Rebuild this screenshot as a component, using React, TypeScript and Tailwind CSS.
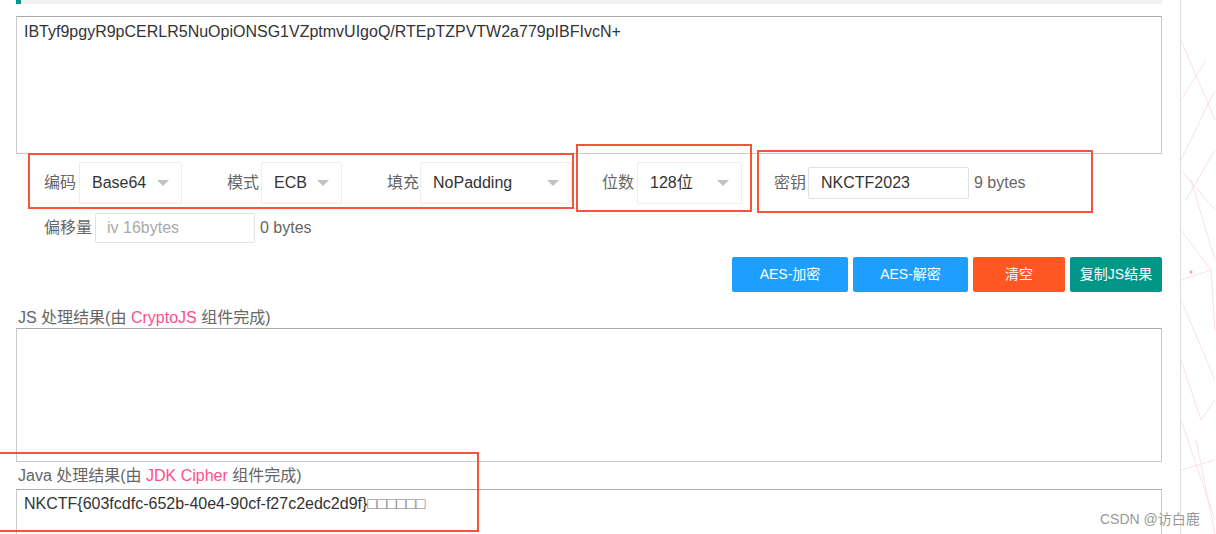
import React from "react";

const font = { fontFamily: '"Liberation Sans", Arial, "Noto Sans CJK SC", sans-serif' };

function Select({ value, width }: { value: string; width: string }) {
  return (
    <div
      className={`${width} flex h-[42px] items-center justify-between rounded-[2px] border border-[#eeeeee] bg-white pl-[12px] pr-[12px] text-[16px] text-[#333]`}
    >
      <span>{value}</span>
      <span className="h-0 w-0 border-x-[6px] border-t-[6px] border-x-transparent border-t-[#c2c2c2]" />
    </div>
  );
}

function Label({ text, width }: { text: string; width: string }) {
  return <span className={`${width} shrink-0 text-[16px] text-[#666]`}>{text}</span>;
}

function Network() {
  const lines = [
    [0, 40, 34, 120],
    [0, 160, 34, 90],
    [0, 170, 34, 210],
    [5, 200, 34, 150],
    [0, 230, 30, 270],
    [30, 270, 34, 330],
    [0, 280, 30, 270],
    [10, 180, 34, 260],
    [0, 300, 34, 380],
    [0, 360, 20, 420],
    [20, 420, 34, 400],
    [0, 420, 34, 520],
    [15, 440, 34, 534],
    [0, 470, 34, 460],
    [0, 100, 25, 60],
  ];
  return (
    <svg width="35" height="534" className="block">
      {lines.map(([x1, y1, x2, y2], i) => (
        <line key={i} x1={x1} y1={y1} x2={x2} y2={y2} stroke="#f6d2dc" strokeWidth="0.7" />
      ))}
      <circle cx="10" cy="272" r="1.5" fill="#ee9fb7" />
    </svg>
  );
}

export default function App() {
  return (
    <div className="relative flex h-[534px] w-[1216px] overflow-hidden bg-white" style={font}>
      <div className="w-[1181px] shrink-0 border-r border-[#dddddd] pl-[16px]">
        <div className="h-[4px] w-[1146px] border-l-[5px] border-[#009688] bg-[#f2f2f2]" />

        <div className="mt-[12px] h-[138px] w-[1146px] border border-[#c9c9c9] border-t-[#aaaaaa] px-[7px] pt-[5px] text-[16px] leading-[20px] text-[#333]">
          IBTyf9pgyR9pCERLR5NuOpiONSG1VZptmvUIgoQ/RTEpTZPVTW2a779pIBFIvcN+
        </div>

        <div className="mt-[8px] flex h-[42px] items-center pl-[28px]">
          <Label text="编码" width="w-[35px]" />
          <Select value="Base64" width="w-[103px]" />
          <span className="ml-[45px]" />
          <Label text="模式" width="w-[34px]" />
          <Select value="ECB" width="w-[81px]" />
          <span className="ml-[45px]" />
          <Label text="填充" width="w-[33px]" />
          <Select value="NoPadding" width="w-[152px]" />
          <span className="ml-[30px]" />
          <Label text="位数" width="w-[35px]" />
          <Select value="128位" width="w-[105px]" />
          <span className="ml-[32px]" />
          <Label text="密钥" width="w-[34px]" />
          <div className="flex h-[32px] w-[161px] items-center rounded-[2px] border border-[#e2e2e2] pl-[12px] text-[16px] text-[#333]">
            NKCTF2023
          </div>
          <span className="ml-[5px] text-[16px] text-[#666]">9 bytes</span>
        </div>

        <div className="mt-[9px] flex h-[30px] items-center pl-[28px]">
          <Label text="偏移量" width="w-[51px]" />
          <div className="flex h-[30px] w-[160px] items-center rounded-[2px] border border-[#e2e2e2] pl-[11px] text-[16px] text-[#aaa]">
            iv 16bytes
          </div>
          <span className="ml-[5px] text-[16px] text-[#666]">0 bytes</span>
        </div>

        <div className="mt-[14px] flex w-[1146px] justify-end gap-[5px] text-[14px] text-white">
          <div className="flex h-[35px] w-[116px] items-center justify-center rounded-[2px] bg-[#1e9fff]">AES-加密</div>
          <div className="flex h-[35px] w-[115px] items-center justify-center rounded-[2px] bg-[#1e9fff]">AES-解密</div>
          <div className="flex h-[35px] w-[92px] items-center justify-center rounded-[2px] bg-[#ff5722]">清空</div>
          <div className="flex h-[35px] w-[92px] items-center justify-center rounded-[2px] bg-[#009688]">复制JS结果</div>
        </div>

        <div className="mt-[16px] h-[20px] pl-[2px] text-[16px] leading-[20px] text-[#666]">
          JS 处理结果(由 <span className="text-[#ff4d8d]">CryptoJS</span> 组件完成)
        </div>
        <div className="h-[134px] w-[1146px] border border-[#c9c9c9] border-t-[#aaaaaa]" />

        <div className="mt-[4px] h-[20px] pl-[2px] text-[16px] leading-[20px] text-[#666]">
          Java 处理结果(由 <span className="text-[#ff4d8d]">JDK Cipher</span> 组件完成)
        </div>
        <div className="mt-[3px] h-[60px] w-[1146px] border border-[#c9c9c9] border-t-[#aaaaaa] px-[7px] pt-[4px] text-[16px] leading-[20px] text-[#333]">
          NKCTF{"{"}603fcdfc-652b-40e4-90cf-f27c2edc2d9f{"}"}
          <span className="text-[#777]">□□□□□□</span>
        </div>
      </div>

      <div className="flex-1">
        <Network />
      </div>

      <div className="pointer-events-none absolute left-[28px] top-[153px] h-[56px] w-[546px] border-2 border-[#f5543a]" />
      <div className="pointer-events-none absolute left-[576px] top-[144px] h-[68px] w-[176px] border-2 border-[#f5543a]" />
      <div className="pointer-events-none absolute left-[757px] top-[150px] h-[63px] w-[336px] border-2 border-[#f5543a]" />
      <div className="pointer-events-none absolute left-[-2px] top-[452px] h-[80px] w-[481px] border-2 border-[#f5543a]" />

      <div className="absolute left-[1100px] top-[509px] text-[14px] text-[#999]">CSDN @访白鹿</div>
    </div>
  );
}
